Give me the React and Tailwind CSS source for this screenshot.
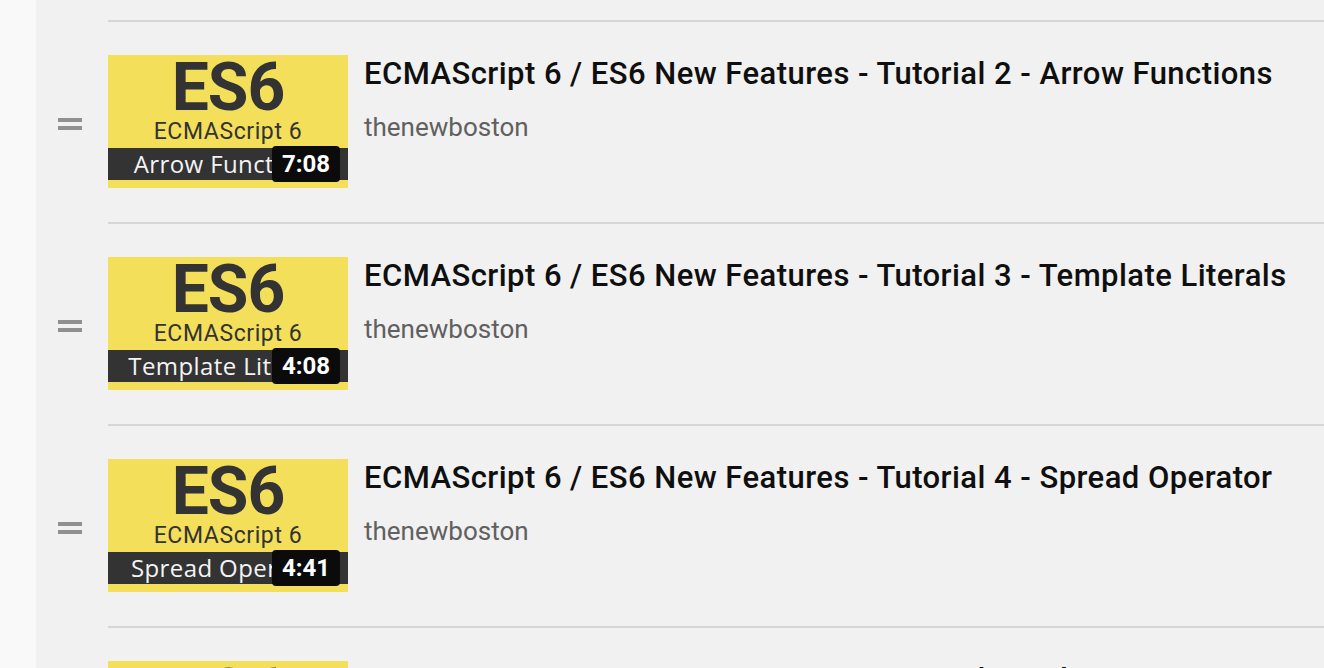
import React from "react";

const videos = [
  { n: 2, name: "Arrow Functions", time: "7:08" },
  { n: 3, name: "Template Literals", time: "4:08" },
  { n: 4, name: "Spread Operator", time: "4:41" },
  { n: 5, name: "Classes", time: "6:12" },
];

const Thumb = ({ name, time }) => (
  <div className="relative w-[240px] h-[133px] shrink-0 bg-[#f4df5a] overflow-hidden">
    <div className="flex flex-col items-center pt-[1px] text-[#333333]">
      <div className="text-[66px] font-bold leading-[64px] tracking-[-1px]">ES6</div>
      <div className="text-[23px] leading-[24px] tracking-[0.6px]">ECMAScript 6</div>
    </div>
    <div className="absolute left-0 right-0 top-[93px] h-[32px] bg-[#333333] flex items-center justify-center">
      <span
        className="text-[24px] text-[#f4f4f4] leading-none whitespace-nowrap tracking-[0.4px]"
        style={{ fontFamily: "'Open Sans', Roboto, sans-serif" }}
      >
        {name}
      </span>
    </div>
    <div className="absolute left-[164px] top-[91px] w-[68px] h-[36px] rounded-[4px] bg-[#0b0b0b] flex items-center justify-center">
      <span className="text-[24px] font-bold text-white leading-none">{time}</span>
    </div>
  </div>
);

const Row = ({ v }) => (
  <div className="flex items-center">
    <div className="w-[72px] shrink-0 flex justify-center pr-[4px] pt-[5px]">
      <div className="flex flex-col gap-[4px]">
        <div className="w-[24px] h-[4px] bg-[#909090]" />
        <div className="w-[24px] h-[4px] bg-[#909090]" />
      </div>
    </div>
    <div className="flex-1 border-t-2 border-[#d6d6d6] pt-[33px] pb-[34px] flex gap-[16px]">
      <Thumb name={v.name} time={v.time} />
      <div className="flex flex-col min-w-0">
        <div className="text-[31px] font-medium text-[#0f0f0f] leading-[38px] tracking-[0.45px] whitespace-nowrap">
          ECMAScript 6 / ES6 New Features - Tutorial {v.n} - {v.name}
        </div>
        <div className="text-[26px] text-[#606060] leading-[32px] mt-[18px]">thenewboston</div>
      </div>
    </div>
  </div>
);

export default function App() {
  return (
    <div
      className="w-[1324px] h-[668px] overflow-hidden flex bg-[#f9f9f9]"
      style={{ fontFamily: "Roboto, 'Liberation Sans', sans-serif" }}
    >
      <div className="w-[36px] shrink-0 bg-[#f9f9f9]" />
      <div className="flex-1 bg-[#f1f1f1] overflow-hidden pt-[20px]">
        {videos.map((v) => (
          <Row key={v.n} v={v} />
        ))}
      </div>
    </div>
  );
}
